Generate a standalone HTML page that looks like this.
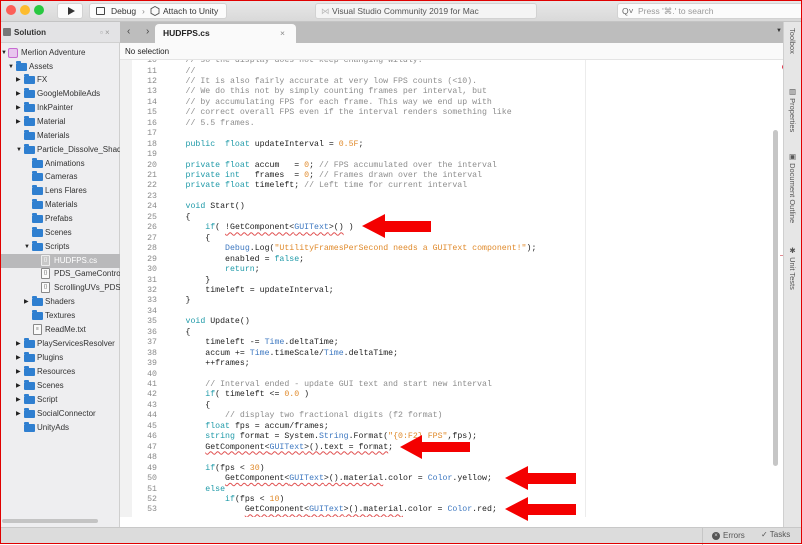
<!DOCTYPE html>
<html><head><meta charset="utf-8"><style>
*{margin:0;padding:0;box-sizing:border-box}
body{width:802px;height:544px;overflow:hidden;position:relative;background:#fff;font-family:"Liberation Sans",sans-serif;}
.abs{position:absolute}
#frame{position:absolute;left:0;top:0;width:802px;height:544px;border:1px solid #e00000;z-index:50;pointer-events:none}
#title{left:0;top:0;width:802px;height:22px;background:linear-gradient(#e8e8e8,#d9d9d9);border-bottom:1px solid #c4c4c4}
.tl{position:absolute;top:5px;width:10px;height:10px;border-radius:50%}
.box{position:absolute;top:3px;height:16px;background:#fbfbfb;border:1px solid #d2d2d2;border-radius:3px;font-size:8.5px;color:#333;line-height:14px}
#side{left:0;top:22px;width:120px;height:505px;background:#eeeef0;border-right:1px solid #cfcfcf}
.row{position:absolute;left:0;width:120px;height:14px;font-size:8px;color:#333;line-height:14px;white-space:nowrap;overflow:hidden}
.row .ar{position:absolute;top:0;font-size:6px;color:#222}
.fd{position:absolute;top:3px;width:11px;height:8px;background:#2f7fd0;border-radius:1px}
.fd:before{content:"";position:absolute;left:0;top:-2px;width:5px;height:2px;background:#2f7fd0;border-radius:1px 1px 0 0}
.fl{position:absolute;top:1px;width:9px;height:11px;border:1px solid #888;background:#fafafa;border-radius:1px;font-size:5px;line-height:9px;text-align:center;color:#666}
.row .t{position:absolute;top:0}
#tabbar{left:120px;top:22px;width:663px;height:21px;background:#bdbdbd}
#nosel{left:120px;top:43px;width:663px;height:17px;background:#fafafa;border-bottom:1px solid #e4e4e4;font-size:8px;line-height:17px;color:#222;padding-left:5px}
#code{left:120px;top:60px;width:663px;height:457px;overflow:hidden;background:#fff}
#gut{left:0;top:0;width:12px;height:457px;background:#f2f2f2}
.ln{position:absolute;left:12px;width:25px;text-align:right;font-family:"Liberation Mono",monospace;font-size:8.24px;color:#8a8a8a;height:10.45px;line-height:10.45px}
.cl{position:absolute;left:65.5px;font-family:"Liberation Mono",monospace;font-size:8.24px;color:#1e1e1e;white-space:pre;height:10.45px;line-height:10.45px}
.k{color:#1f9aa8}.c{color:#8d8d8d}.n{color:#e08a2b}.s{color:#e08a2b}.ty{color:#3c77c0}
.sq{text-decoration:underline wavy #e05050;text-decoration-thickness:0.7px;text-underline-offset:2px}
#rside{left:783px;top:22px;width:19px;height:505px;background:#e6e6e6;border-left:1px solid #cfcfcf}
.vt{position:absolute;left:4px;writing-mode:vertical-rl;font-size:7.5px;color:#555;white-space:nowrap}
#status{left:0;top:527px;width:802px;height:17px;background:#dcdcdc;border-top:1px solid #c8c8c8}
</style></head><body>
<div id="frame"></div>
<div class="abs" id="title">
 <div class="tl" style="left:6px;background:#fc5f57"></div>
 <div class="tl" style="left:20px;background:#fdbc2e"></div>
 <div class="tl" style="left:34px;background:#28c840"></div>
 <div class="box" style="left:57px;width:26px"><svg width="26" height="14" style="position:absolute;left:0;top:0"><path d="M10 3 L10 11 L17 7 Z" fill="#333"/></svg></div>
 <div class="box" style="left:89px;width:138px"><span style="position:absolute;left:6px;top:3px;width:9px;height:8px;border:1px solid #444;border-radius:1px"></span><span style="position:absolute;left:21px">Debug</span><span style="position:absolute;left:52px;color:#888">›</span><svg width="10" height="10" style="position:absolute;left:60px;top:2px"><path d="M5 0.5 L9 2.7 L9 7.3 L5 9.5 L1 7.3 L1 2.7 Z" fill="none" stroke="#555" stroke-width="0.9"/></svg><span style="position:absolute;left:73px">Attach to Unity</span></div>
 <div class="box" style="left:315px;width:222px;color:#555;background:#f4f4f4"><span style="position:absolute;left:5px;color:#bbb">⋈</span><span style="position:absolute;left:16px">Visual Studio Community 2019 for Mac</span></div>
 <div class="box" style="left:617px;width:186px;color:#999"><span style="position:absolute;left:4px;color:#666">Q˅</span><span style="position:absolute;left:20px">Press '⌘.' to search</span></div>
</div>
<div class="abs" id="side">
 <div class="abs" style="left:0;top:0;width:120px;height:21px;background:#e3e3e5;border-bottom:1px solid #d0d0d0;font-size:8px;font-weight:bold;line-height:21px;color:#333"><span style="position:absolute;left:3px;top:6px;width:8px;height:8px;background:#777;border-radius:1px"></span><span style="position:absolute;left:14px">Solution</span><span style="position:absolute;left:100px;color:#999;font-weight:normal">▫ ×</span></div>
 <div class="row" style="top:24px"><span class="ar" style="left:1px">▼</span><span class="abs" style="left:8px;top:2px;width:10px;height:10px;border:1.5px solid #c76bd1;border-radius:2px;background:#e8c6ee"></span><span class="t" style="left:21px">Merlion Adventure</span></div>
 <div class="row" style="top:38px"><span class="ar" style="left:8px">▼</span><span class="fd" style="left:16px"></span><span class="t" style="left:29px">Assets</span></div>
 <div class="row" style="top:51px"><span class="ar" style="left:16px">▶</span><span class="fd" style="left:24px"></span><span class="t" style="left:37px">FX</span></div>
 <div class="row" style="top:65px"><span class="ar" style="left:16px">▶</span><span class="fd" style="left:24px"></span><span class="t" style="left:37px">GoogleMobileAds</span></div>
 <div class="row" style="top:79px"><span class="ar" style="left:16px">▶</span><span class="fd" style="left:24px"></span><span class="t" style="left:37px">InkPainter</span></div>
 <div class="row" style="top:93px"><span class="ar" style="left:16px">▶</span><span class="fd" style="left:24px"></span><span class="t" style="left:37px">Material</span></div>
 <div class="row" style="top:107px"><span class="fd" style="left:24px"></span><span class="t" style="left:37px">Materials</span></div>
 <div class="row" style="top:121px"><span class="ar" style="left:16px">▼</span><span class="fd" style="left:24px"></span><span class="t" style="left:37px">Particle_Dissolve_Shader</span></div>
 <div class="row" style="top:135px"><span class="fd" style="left:32px"></span><span class="t" style="left:45px">Animations</span></div>
 <div class="row" style="top:148px"><span class="fd" style="left:32px"></span><span class="t" style="left:45px">Cameras</span></div>
 <div class="row" style="top:162px"><span class="fd" style="left:32px"></span><span class="t" style="left:45px">Lens Flares</span></div>
 <div class="row" style="top:176px"><span class="fd" style="left:32px"></span><span class="t" style="left:45px">Materials</span></div>
 <div class="row" style="top:190px"><span class="fd" style="left:32px"></span><span class="t" style="left:45px">Prefabs</span></div>
 <div class="row" style="top:204px"><span class="fd" style="left:32px"></span><span class="t" style="left:45px">Scenes</span></div>
 <div class="row" style="top:218px"><span class="ar" style="left:24px">▼</span><span class="fd" style="left:32px"></span><span class="t" style="left:45px">Scripts</span></div>
 <div class="row" style="top:232px;background:#b9b9bb;color:#fff"><span class="fl" style="left:41px;border-color:#eee;background:#c8c8c8;color:#fff">{}</span><span class="t" style="left:54px">HUDFPS.cs</span></div>
 <div class="row" style="top:245px"><span class="fl" style="left:41px">{}</span><span class="t" style="left:54px">PDS_GameController.cs</span></div>
 <div class="row" style="top:259px"><span class="fl" style="left:41px">{}</span><span class="t" style="left:54px">ScrollingUVs_PDS.cs</span></div>
 <div class="row" style="top:273px"><span class="ar" style="left:24px">▶</span><span class="fd" style="left:32px"></span><span class="t" style="left:45px">Shaders</span></div>
 <div class="row" style="top:287px"><span class="fd" style="left:32px"></span><span class="t" style="left:45px">Textures</span></div>
 <div class="row" style="top:301px"><span class="fl" style="left:33px">≡</span><span class="t" style="left:45px">ReadMe.txt</span></div>
 <div class="row" style="top:315px"><span class="ar" style="left:16px">▶</span><span class="fd" style="left:24px"></span><span class="t" style="left:37px">PlayServicesResolver</span></div>
 <div class="row" style="top:329px"><span class="ar" style="left:16px">▶</span><span class="fd" style="left:24px"></span><span class="t" style="left:37px">Plugins</span></div>
 <div class="row" style="top:343px"><span class="ar" style="left:16px">▶</span><span class="fd" style="left:24px"></span><span class="t" style="left:37px">Resources</span></div>
 <div class="row" style="top:357px"><span class="ar" style="left:16px">▶</span><span class="fd" style="left:24px"></span><span class="t" style="left:37px">Scenes</span></div>
 <div class="row" style="top:371px"><span class="ar" style="left:16px">▶</span><span class="fd" style="left:24px"></span><span class="t" style="left:37px">Script</span></div>
 <div class="row" style="top:385px"><span class="ar" style="left:16px">▶</span><span class="fd" style="left:24px"></span><span class="t" style="left:37px">SocialConnector</span></div>
 <div class="row" style="top:399px"><span class="fd" style="left:24px"></span><span class="t" style="left:37px">UnityAds</span></div>
 <div class="abs" style="left:2px;top:497px;width:96px;height:4px;background:#c4c4c4;border-radius:2px"></div>
</div>
<div class="abs" id="tabbar">
 <span class="abs" style="left:7px;top:4px;font-size:10px;color:#444">‹</span>
 <span class="abs" style="left:26px;top:4px;font-size:10px;color:#444">›</span>
 <div class="abs" style="left:35px;top:2px;width:141px;height:19px;background:#fafafa;border-radius:4px 4px 0 0;font-size:8.5px;font-weight:bold;color:#222;line-height:19px"><span style="position:absolute;left:8px">HUDFPS.cs</span><span style="position:absolute;left:125px;font-weight:normal;color:#888">×</span></div>
 <span class="abs" style="left:656px;top:6px;font-size:6px;color:#333">▼</span>
</div>
<div class="abs" id="nosel">No selection</div>
<div class="abs" id="code">
 <div class="abs" id="gut"></div>
 <div class="abs" style="left:465px;top:0;width:1px;height:457px;background:#ececec"></div>
 <div class="abs" style="left:653px;top:70px;width:5px;height:336px;background:#c6c6c6;border-radius:3px"></div>
 <div class="abs" style="left:662px;top:4px;width:6px;height:6px;border-radius:50%;background:#e0344a"></div>
 <div class="abs" style="left:660px;top:195px;width:3px;height:1px;background:#e08a90"></div>
 <div class="abs" id="lines"></div>
</div>
<div class="abs" id="rside">
 <div class="vt" style="top:6px">Toolbox</div>
 <div class="vt" style="top:65px">▥ Properties</div>
 <div class="vt" style="top:130px">▣ Document Outline</div>
 <div class="vt" style="top:224px">✱ Unit Tests</div>
</div>
<div class="abs" id="status">
 <div class="abs" style="left:702px;top:0;width:1px;height:17px;background:#c6c6c6"></div>
 <span class="abs" style="left:712px;top:4px;width:8px;height:8px;border-radius:50%;background:#555;color:#ddd;font-size:6px;line-height:8px;text-align:center">×</span>
 <span class="abs" style="left:723px;top:3px;font-size:8px;color:#555">Errors</span>
 <span class="abs" style="left:761px;top:2px;font-size:8px;color:#555">✓ Tasks</span>
</div>
<svg class="abs" style="left:0;top:0;z-index:20" width="802" height="544">
 <g fill="#f40000">
  <path d="M362 226 L385 214 L385 221 L431 221 L431 232 L385 232 L385 238 Z"/>
  <path d="M400 447 L422 435 L422 442 L470 442 L470 452 L422 452 L422 459 Z"/>
  <path d="M505 478 L528 466 L528 473 L576 473 L576 484 L528 484 L528 490 Z"/>
  <path d="M505 509 L528 497 L528 504 L576 504 L576 515 L528 515 L528 521 Z"/>
 </g>
</svg>
<script>
var L=[
[10,'<span class="c">// so the display does not keep changing wildly.</span>'],
[11,'<span class="c">//</span>'],
[12,'<span class="c">// It is also fairly accurate at very low FPS counts (&lt;10).</span>'],
[13,'<span class="c">// We do this not by simply counting frames per interval, but</span>'],
[14,'<span class="c">// by accumulating FPS for each frame. This way we end up with</span>'],
[15,'<span class="c">// correct overall FPS even if the interval renders something like</span>'],
[16,'<span class="c">// 5.5 frames.</span>'],
[17,''],
[18,'<span class="k">public</span>  <span class="k">float</span> updateInterval = <span class="n">0.5F</span>;'],
[19,''],
[20,'<span class="k">private</span> <span class="k">float</span> accum   = <span class="n">0</span>; <span class="c">// FPS accumulated over the interval</span>'],
[21,'<span class="k">private</span> <span class="k">int</span>   frames  = <span class="n">0</span>; <span class="c">// Frames drawn over the interval</span>'],
[22,'<span class="k">private</span> <span class="k">float</span> timeleft; <span class="c">// Left time for current interval</span>'],
[23,''],
[24,'<span class="k">void</span> Start()'],
[25,'{'],
[26,'    <span class="k">if</span>( <span class="sq">!GetComponent&lt;<span class="ty">GUIText</span>&gt;()</span> )'],
[27,'    {'],
[28,'        <span class="ty">Debug</span>.Log(<span class="s">"UtilityFramesPerSecond needs a GUIText component!"</span>);'],
[29,'        enabled = <span class="k">false</span>;'],
[30,'        <span class="k">return</span>;'],
[31,'    }'],
[32,'    timeleft = updateInterval;'],
[33,'}'],
[34,''],
[35,'<span class="k">void</span> Update()'],
[36,'{'],
[37,'    timeleft -= <span class="ty">Time</span>.deltaTime;'],
[38,'    accum += <span class="ty">Time</span>.timeScale/<span class="ty">Time</span>.deltaTime;'],
[39,'    ++frames;'],
[40,''],
[41,'    <span class="c">// Interval ended - update GUI text and start new interval</span>'],
[42,'    <span class="k">if</span>( timeleft &lt;= <span class="n">0.0</span> )'],
[43,'    {'],
[44,'        <span class="c">// display two fractional digits (f2 format)</span>'],
[45,'    <span class="k">float</span> fps = accum/frames;'],
[46,'    <span class="k">string</span> format = System.<span class="ty">String</span>.Format(<span class="s">"{0:F2} FPS"</span>,fps);'],
[47,'    <span class="sq">GetComponent&lt;<span class="ty">GUIText</span>&gt;().text = format</span>;'],
[48,''],
[49,'    <span class="k">if</span>(fps &lt; <span class="n">30</span>)'],
[50,'        <span class="sq">GetComponent&lt;<span class="ty">GUIText</span>&gt;().material</span>.color = <span class="ty">Color</span>.yellow;'],
[51,'    <span class="k">else</span>'],
[52,'        <span class="k">if</span>(fps &lt; <span class="n">10</span>)'],
[53,'            <span class="sq">GetComponent&lt;<span class="ty">GUIText</span>&gt;().material</span>.color = <span class="ty">Color</span>.red;']
];
var h='';
L.forEach(function(a){var y=(a[0]-11)*10.45+6.5;h+='<div class="ln" style="top:'+y+'px">'+a[0]+'</div><div class="cl" style="top:'+y+'px">'+a[1]+'</div>';});
document.getElementById('lines').innerHTML=h;
</script>
</body></html>
